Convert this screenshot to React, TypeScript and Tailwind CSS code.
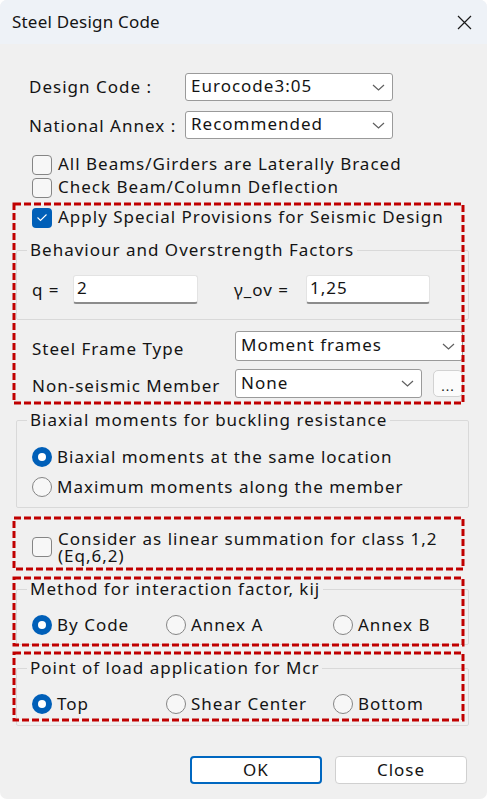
import { ReactNode } from "react";

// chevron used by the combo boxes
function Chevron() {
    return (
        <svg width="13" height="7" viewBox="0 0 13 7" className="shrink-0">
            <path d="M1 1 L6.5 6 L12 1" fill="none" stroke="#5f5f5f" strokeWidth="1.2" />
        </svg>
    );
}

function Combo({ value, width, height }: { value: string; width: string; height: string }) {
    return (
        <div className={`${width} ${height} bg-white border border-[#9a9a9a] rounded-[3px] flex items-center justify-between pl-[5px] pr-[7px]`}>
            <span className="-mt-[3px]">{value}</span>
            <Chevron />
        </div>
    );
}

function CheckBox({ checked }: { checked?: boolean }) {
    if (checked) {
        return (
            <div className="w-[20px] h-[20px] shrink-0 rounded-[4px] bg-[#005fb8] flex items-center justify-center">
                <svg width="12" height="9" viewBox="0 0 12 9">
                    <path d="M1.5 4.5 L4.5 7.4 L10.5 1.5" fill="none" stroke="white" strokeWidth="1.1" />
                </svg>
            </div>
        );
    }
    return <div className="w-[20px] h-[20px] shrink-0 rounded-[4px] border-[1.5px] border-[#858585] bg-[#f7f7f7]" />;
}

function Radio({ checked }: { checked?: boolean }) {
    if (checked) {
        return (
            <div className="w-[20px] h-[20px] shrink-0 rounded-full bg-[#005fb8] flex items-center justify-center">
                <div className="w-[8px] h-[8px] rounded-full bg-white" />
            </div>
        );
    }
    return <div className="w-[20px] h-[20px] shrink-0 rounded-full border-[1.5px] border-[#858585] bg-[#f7f7f7]" />;
}

function RadioItem({ label, checked, width }: { label: string; checked?: boolean; width?: string }) {
    return (
        <div className={`flex items-center gap-[5px] ${width ?? ""}`}>
            <Radio checked={checked} />
            <span className="-mt-[2px]">{label}</span>
        </div>
    );
}

// red dashed annotation frame laid over a section
function Marker({ height }: { height: string }) {
    return (
        <div className={`absolute -left-1 top-0 w-[452px] ${height} pointer-events-none`}>
            <svg className="absolute left-[1.5px] top-[1.5px] w-[calc(100%-3px)] h-[calc(100%-3px)] overflow-visible">
                <rect x="0" y="0" width="100%" height="100%" fill="none" stroke="#c00000" strokeWidth="3" strokeDasharray="7 3" />
            </svg>
        </div>
    );
}

function Group({ title, className, children }: { title: string; className?: string; children: ReactNode }) {
    return (
        <fieldset className={`border border-[#d9d9d9] rounded-[2px] ${className ?? ""}`}>
            <legend className="-ml-[5px] px-[3px] leading-[22px]">{title}</legend>
            {children}
        </fieldset>
    );
}

export default function App() {
    return (
        <div className="w-[487px] h-[799px] bg-[#f0f0f0] overflow-hidden flex flex-col rounded-[7px] text-[17px] tracking-[1px] text-[#141414] font-['Noto_Sans',sans-serif]">
            {/* title bar */}
            <div className="h-[44px] shrink-0 bg-[#eef2f7] flex items-center justify-between pl-3 pr-[15px]">
                <span className="text-[17px] tracking-[0.2px] -mt-[1px]">Steel Design Code</span>
                <svg width="15" height="15" viewBox="0 0 15 15">
                    <path d="M1 1 L14 14 M14 1 L1 14" stroke="#1a1a1a" strokeWidth="1.2" />
                </svg>
            </div>

            <div className="flex flex-col pl-4 pr-[18px] leading-[23px]">
                <div className="mt-[29px] h-[28px] flex items-center pl-[13px]">
                    <span className="w-[156px] -mt-[2px]">Design Code :</span>
                    <Combo value="Eurocode3:05" width="w-[208px]" height="h-[28px]" />
                </div>
                <div className="mt-[10px] h-[28px] flex items-center pl-[13px]">
                    <span className="w-[156px]">National Annex :</span>
                    <Combo value="Recommended" width="w-[208px]" height="h-[28px]" />
                </div>

                <div className="mt-[14px] h-[23px] flex items-center gap-[6px] pl-4">
                    <CheckBox />
                    <span className="-mt-[2px]">All Beams/Girders are Laterally Braced</span>
                </div>
                <div className="h-[23px] flex items-center gap-[6px] pl-4">
                    <CheckBox />
                    <span className="-mt-[2px]">Check Beam/Column Deflection</span>
                </div>

                {/* seismic section */}
                <div className="relative mt-[3px] pt-1 pb-[5px]">
                    <div className="h-[23px] flex items-center gap-[6px] pl-4">
                        <CheckBox checked />
                        <span className="-mt-[2px]">Apply Special Provisions for Seismic Design</span>
                    </div>

                    <Group title="Behaviour and Overstrength Factors" className="mt-[10px] pt-[14px] pb-[15px] pl-[15px]">
                        <div className="flex items-center h-[29px]">
                            <span className="w-[41px]">q =</span>
                            <div className="w-[125px] h-[29px] bg-white border border-[#e3e3e3] border-b-[2px] border-b-[#8c8c8c] rounded-[3px] pl-[3px] leading-[24px]">2</div>
                            <span className="ml-[36px] w-[72px]">γ_ov =</span>
                            <div className="w-[124px] h-[29px] bg-white border border-[#e3e3e3] border-b-[2px] border-b-[#8c8c8c] rounded-[3px] pl-[3px] leading-[24px]">1,25</div>
                        </div>
                    </Group>

                    <div className="mt-[11px] h-[30px] flex items-center pl-4">
                        <span className="w-[203px] mt-[5px]">Steel Frame Type</span>
                        <Combo value="Moment frames" width="w-[228px]" height="h-[30px]" />
                    </div>
                    <div className="mt-[8px] h-[29px] flex items-center pl-4">
                        <span className="w-[203px] mt-[4px]">Non-seismic Member</span>
                        <Combo value="None" width="w-[187px]" height="h-[29px]" />
                        <div className="ml-[11px] w-[30px] h-[27px] bg-[#fbfbfb] border border-[#d2d2d2] rounded-[5px] flex items-end justify-center pb-[3px] text-[13px] leading-[13px] tracking-[1px]">...</div>
                    </div>
                    <Marker height="h-[202px]" />
                </div>

                <Group title="Biaxial moments for buckling resistance" className="mt-[6px] pt-[11px] pb-[5px] pl-[15px]">
                    <div className="flex flex-col">
                        <div className="h-[30px] flex items-center"><RadioItem label="Biaxial moments at the same location" checked /></div>
                        <div className="h-[30px] flex items-center"><RadioItem label="Maximum moments along the member" /></div>
                    </div>
                </Group>

                {/* class 1,2 summation */}
                <div className="relative mt-[8px] h-[54px] pt-[7px] flex items-center gap-[6px] pl-4">
                    <CheckBox />
                    <div className="flex flex-col">
                        <div className="h-[17px] leading-[17px]">Consider as linear summation for class 1,2</div>
                        <div className="h-[17px] leading-[17px]">(Eq,6,2)</div>
                    </div>
                    <Marker height="h-[54px]" />
                </div>

                {/* interaction factor */}
                <div className="relative mt-[6px] pt-[2px] pb-[1px]">
                    <Group title="Method for interaction factor, kij" className="pt-[10px] pb-[4px] pl-[15px]">
                        <div className="h-[30px] flex items-center">
                            <RadioItem label="By Code" checked width="w-[134px]" />
                            <RadioItem label="Annex A" width="w-[167px]" />
                            <RadioItem label="Annex B" />
                        </div>
                    </Group>
                    <Marker height="h-[70px]" />
                </div>

                {/* load application */}
                <div className="relative mt-[5px] pt-[6px]">
                    <Group title="Point of load application for Mcr" className="pt-[10px] pb-[6px] pl-[15px]">
                        <div className="h-[30px] flex items-center">
                            <RadioItem label="Top" checked width="w-[134px]" />
                            <RadioItem label="Shear Center" width="w-[167px]" />
                            <RadioItem label="Bottom" />
                        </div>
                    </Group>
                    <Marker height="h-[70px]" />
                </div>

                <div className="mt-[30px] flex justify-end gap-[13px] pr-[2px]">
                    <button className="w-[132px] h-[28px] bg-white border-2 border-[#0067c0] rounded-[4px] leading-[22px]">OK</button>
                    <button className="w-[132px] h-[28px] bg-white border border-[#d0d0d0] rounded-[4px] leading-[24px]">Close</button>
                </div>
            </div>
        </div>
    );
}
